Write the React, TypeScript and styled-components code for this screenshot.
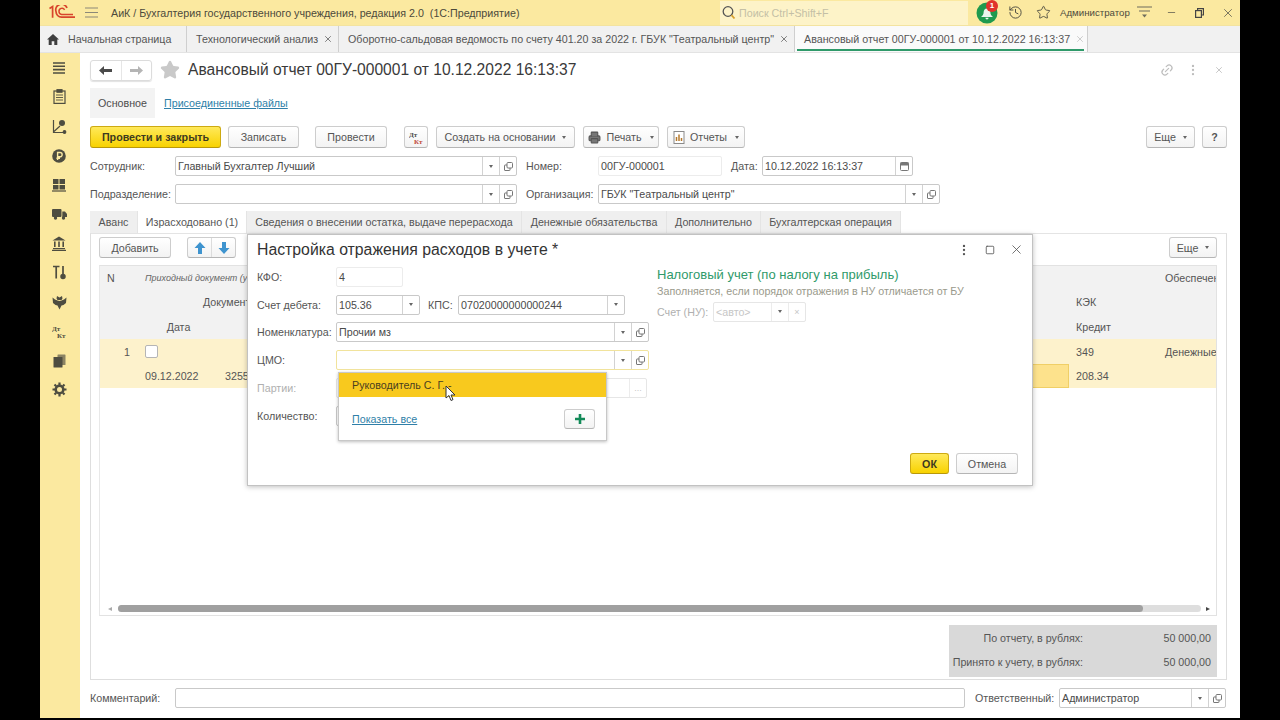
import React from "react";
import styled, { createGlobalStyle } from "styled-components";
import { History, Star, Link2, MoreVertical, X, Printer, Square, Minus } from "lucide-react";

const Global = createGlobalStyle`
  html, body { margin: 0; padding: 0; background: #000; overflow: hidden; }
  body { font-family: "Liberation Sans", Arial, sans-serif; font-size: 10.7px; color: #4a4a4a; }
  * { box-sizing: border-box; }
`;

const Page = styled.div`
  width: 1280px; height: 720px; padding: 0 40px 2px; background: #000;
`;
const Win = styled.div`
  position: relative; width: 1200px; height: 718px; display: flex; flex-direction: column; background: #fff; overflow: hidden;
`;

/* ---------- top bar ---------- */
const TopBar = styled.header`
  height: 26px; flex: none; display: flex; align-items: center; background: #fbe9a0; border-bottom: 1px solid #f3e3a0;
`;
const LogoSlot = styled.div`
  width: 45px; flex: none; padding-left: 9px; display: flex; align-items: center;
`;
const BurgerSlot = styled.div`
  width: 26px; flex: none; display: flex; align-items: center;
`;
const AppTitle = styled.div`
  width: 609px; flex: none; font-size: 10.7px; color: #4c4a3c; white-space: pre;
`;
const Search = styled.div`
  width: 248px; height: 24px; flex: none; display: flex; align-items: center; gap: 3px; padding-left: 2px; background: #fdf3c8; color: #c4bfa6; font-size: 10.7px;
`;
const IconSlot = styled.div<{ $w: number }>`
  position: relative; width: ${(p) => p.$w}px; flex: none; display: flex; justify-content: center; align-items: center;
`;
const UserName = styled.div`
  width: 74px; flex: none; margin-left: -2px; font-size: 9.7px; color: #4c4a3c; white-space: nowrap;
`;
const Badge = styled.span`
  position: absolute; top: -2px; left: 18px; width: 12px; height: 12px; border-radius: 50%; background: #e0332b; color: #fff; font-size: 8px; line-height: 12px; text-align: center; font-weight: 700;
`;
const Hue = styled.span<{ $c: string }>`
  display: flex; color: ${(p) => p.$c};
`;

/* ---------- window tabs ---------- */
const TabStrip = styled.nav`
  height: 27px; flex: none; display: flex; background: #f1f1f1; border-bottom: 1px solid #e3e3e3;
`;
const WinTab = styled.div<{ $w: number; $active?: boolean }>`
  position: relative; width: ${(p) => p.$w}px; display: flex; align-items: center; gap: 5px; padding-left: 9px;
  border-right: 1px solid #cfcfcf; background: ${(p) => (p.$active ? "#fafafa" : "transparent")}; color: #555; font-size: 10.7px; white-space: nowrap;
  ${(p) => p.$active && `&::after { content: ""; position: absolute; left: 2px; right: 3px; bottom: 1px; height: 2px; background: #2f9a6a; }`}
`;
const HomeLabel = styled.span`
  display: flex; align-items: center; gap: 9px; color: #555; margin-left: -2px;
`;
const TabClose = styled.span<{ $faint?: boolean }>`
  color: ${(p) => (p.$faint ? "#c4c4c4" : "#666")}; display: flex;
`;

/* ---------- workspace ---------- */
const Workspace = styled.div`
  flex: 1; display: flex; min-height: 0;
`;
const SideBar = styled.aside`
  width: 40px; flex: none; display: flex; flex-direction: column; align-items: center; padding-right: 2px; background: #fbe9a0; color: #4e4d40;
`;
const SideIcon = styled.div`
  height: 29.3px; display: flex; align-items: center; justify-content: center; flex: none;
`;
const FormArea = styled.main`
  flex: 1; display: flex; flex-direction: column; padding: 6px 13px 0 10px; background: #fff; min-width: 0;
`;
const HeaderRow = styled.div`
  height: 22px; display: flex; align-items: center;
`;
const NavGroup = styled.div`
  width: 62px; height: 21px; display: flex; border: 1px solid #dcdcdc; border-radius: 3px; box-shadow: 0 1px 1px #e2e2e2;
`;
const NavBtn = styled.div`
  flex: 1; display: flex; align-items: center; justify-content: center;
  & + & { border-left: 1px solid #e6e6e6; }
`;
const FavStar = styled.div`
  width: 36px; display: flex; justify-content: center; color: #c9c9c9;
`;
const FormTitle = styled.h1`
  margin: 0; flex: 1; font-size: 15.6px; font-weight: 400; color: #3a3a3a; white-space: nowrap;
`;
const HeaderTools = styled.div`
  display: flex; align-items: center; margin-right: -5px; color: #bdbdbd;
`;

const GroupTabs = styled.div`
  height: 30px; margin-top: 7px; display: flex; align-items: center;
`;
const GroupActive = styled.div`
  width: 65px; height: 30px; display: flex; align-items: center; justify-content: center; background: #f3f3f3; color: #4c4c4c; font-size: 10.7px;
`;
const LinkText = styled.a`
  color: #2f7fa8; text-decoration: underline; font-size: 10.7px;
`;
const AttachLink = styled(LinkText)`
  margin-left: 9px;
`;

const CommandBar = styled.div`
  height: 22px; margin-top: 8px; display: flex; align-items: center;
`;
const Btn = styled.div<{ $w: number; $ml?: number; $h?: number }>`
  width: ${(p) => p.$w}px; height: ${(p) => p.$h ?? 22}px; margin-left: ${(p) => p.$ml ?? 0}px; flex: none;
  display: flex; align-items: center; justify-content: center; gap: 4px;
  border: 1px solid #cdcdcd; border-bottom-color: #b5b5b5; border-radius: 3px; background: linear-gradient(#ffffff, #f3f3f3);
  color: #555; font-size: 10.7px; white-space: nowrap;
`;
const PrimaryBtn = styled(Btn)`
  border-color: #cdaa12; border-bottom-color: #b8980a; background: linear-gradient(#ffe95a, #f8d200); color: #3d3a20; font-weight: 700;
`;
const IconTextBtn = styled(Btn)`
  gap: 5px;
`;
const Spacer = styled.div`
  flex: 1;
`;
const Caret = styled.i`
  display: inline-block; width: 0; height: 0; border-left: 2.5px solid transparent; border-right: 2.5px solid transparent; border-top: 3px solid #666; margin-left: 3px;
`;

const FieldRow = styled.div`
  height: 20px; margin-top: 8px; display: flex; align-items: center;
`;
const Label = styled.div<{ $w: number; $ml?: number; $dim?: boolean }>`
  width: ${(p) => p.$w}px; margin-left: ${(p) => p.$ml ?? 0}px; flex: none; color: ${(p) => (p.$dim ? "#b0b0b0" : "#555")}; font-size: 10.7px; white-space: nowrap;
`;
const Field = styled.div<{ $w: number; $tone?: "soft" | "focus" | "dim" }>`
  width: ${(p) => p.$w}px; height: 20px; flex: none; display: flex; align-items: stretch; background: #fff; border-radius: 2px;
  border: 1px solid ${(p) => (p.$tone === "soft" ? "#ececec" : p.$tone === "focus" ? "#f1e39c" : p.$tone === "dim" ? "#e6e6e6" : "#c9c9c9")};
`;
const FieldText = styled.div<{ $dim?: boolean }>`
  flex: 1; min-width: 0; display: flex; align-items: center; padding-left: 2px; color: ${(p) => (p.$dim ? "#c6c6c6" : "#4a4a4a")}; font-size: 10.7px; white-space: nowrap; overflow: hidden;
`;
const FieldBtn = styled.div<{ $dim?: boolean }>`
  width: 17px; flex: none; display: flex; align-items: center; justify-content: center; border-left: 1px solid ${(p) => (p.$dim ? "#ececec" : "#d2d2d2")}; color: ${(p) => (p.$dim ? "#c6c6c6" : "#666")}; font-size: 9px;
`;
const FieldCaret = styled(Caret)`
  margin-left: 0;
`;

const PageTabs = styled.div`
  height: 22px; margin-top: 7px; display: flex;
`;
const PageTab = styled.div<{ $w: number; $active?: boolean }>`
  width: ${(p) => p.$w}px; display: flex; align-items: center; justify-content: center; font-size: 10.7px; white-space: nowrap; color: #555;
  background: ${(p) => (p.$active ? "#fff" : "#efefef")}; border-right: 1px solid #e4e4e4;
`;
const Panel = styled.section`
  height: 447px; flex: none; padding: 3px 9px 0 8px; display: flex; flex-direction: column; border: 1px solid #dedede; border-top-color: #e4e4e4;
`;
const PanelBar = styled.div`
  height: 21px; display: flex; align-items: center;
`;
const ArrowGroup = styled.div`
  width: 49px; height: 21px; margin-left: 16px; display: flex; border: 1px solid #cdcdcd; border-bottom-color: #b5b5b5; border-radius: 3px; background: linear-gradient(#fff, #f3f3f3);
`;
const ArrowBtn = styled.div`
  flex: 1; display: flex; align-items: center; justify-content: center; & + & { border-left: 1px solid #dcdcdc; }
`;

const Table = styled.div`
  height: 351px; margin-top: 7px; flex: none; display: flex; flex-direction: column; border: 1px solid #e2e2e2; border-left-color: #e8e8e8;
`;
const TRow = styled.div<{ $bg: string; $h: number }>`
  height: ${(p) => p.$h}px; flex: none; display: grid; grid-template-columns: 37px 83px 680px 169px 89px 1fr; background: ${(p) => p.$bg}; overflow: hidden;
`;
const Cell = styled.div<{ $pad?: number; $hl?: boolean; $italic?: boolean; $span?: number }>`
  display: flex; align-items: center; padding-left: ${(p) => p.$pad ?? 7}px; color: #555; white-space: nowrap; overflow: hidden; font-size: 10.7px;
  ${(p) => p.$span && `grid-column: span ${p.$span};`}
  ${(p) => p.$italic && "font-style: italic; font-size: 9px; color: #666;"}
  ${(p) => p.$hl && "background: #fde28c; border: 1px solid #f0cf66;"}
`;
const CenterCell = styled(Cell)`
  justify-content: center; padding-left: 0;
`;
const NumberCell = styled(Cell)`
  justify-content: flex-end; padding: 0 7px 0 0;
`;
const CheckBox = styled.span`
  width: 13px; height: 13px; border: 1px solid #b5b5b5; border-radius: 2px; background: #fff;
`;
const TableFill = styled.div`
  flex: 1;
`;
const ScrollRow = styled.div`
  height: 13px; flex: none; display: flex; align-items: center; padding: 0 6px 0 8px; color: #777;
`;
const ScrollTrack = styled.div`
  flex: 1; height: 7px; margin: 0 5px 0 6px; border-radius: 4px; background: #dedede;
`;
const ScrollThumb = styled.div`
  width: 1025px; height: 7px; border-radius: 4px; background: #a0a0a0;
`;
const Totals = styled.div`
  width: 268px; height: 52px; margin: 9px 0 0 auto; padding: 1px 6px 0 3px; background: #d9d9d9; display: grid; grid-template-columns: 131px 1fr; grid-auto-rows: 24px; align-items: center; color: #555; font-size: 10.7px; white-space: nowrap;
`;
const TotalLabel = styled.div`
  text-align: right;
`;
const TotalValue = styled.div`
  text-align: right;
`;
const Tri = styled.i<{ $dir: "l" | "r" }>`
  width: 0; height: 0; border-top: 2.5px solid transparent; border-bottom: 2.5px solid transparent;
  ${(p) => (p.$dir === "l" ? "border-right: 4px solid #aaa;" : "border-left: 4px solid #444;")}
`;

/* ---------- dialog ---------- */
const Dialog = styled.section`
  position: absolute; left: 207px; top: 234px; width: 786px; height: 252px; padding: 5px 14px 11px 9px; display: flex; flex-direction: column; background: #fff;
  border: 1px solid #c2c2c2; box-shadow: 0 1px 5px rgba(0,0,0,.25);
`;
const DialogHead = styled.div`
  height: 19px; display: flex; align-items: center;
`;
const DialogTitle = styled.h2`
  flex: 1; margin: 0; font-size: 15.8px; font-weight: 400; color: #333; white-space: nowrap;
`;
const DialogTools = styled.div`
  display: flex; align-items: center; margin-right: -11px; color: #555;
`;
const DialogBody = styled.div`
  flex: 1; display: grid; grid-template-columns: 400px 1fr; min-height: 0;
`;
const FormCol = styled.div`
  padding-top: 0;
`;
const DRow = styled.div`
  height: 20px; margin-top: 7.8px; display: flex; align-items: center;
`;
const TaxCol = styled.div`
  padding-top: 8px;
`;
const TaxTitle = styled.div`
  font-size: 13px; color: #2f9a6a; line-height: 15px; white-space: nowrap;
`;
const TaxNote = styled.div`
  font-size: 10.7px; color: #9a9a8c; line-height: 13px; margin-top: 3px; white-space: nowrap;
`;
const TaxRow = styled.div`
  height: 19px; margin-top: 4px; display: flex; align-items: center;
`;
const DialogFoot = styled.div`
  display: flex; justify-content: flex-end; align-items: center;
`;
const DropDown = styled.div`
  position: absolute; left: 90px; top: 137px; width: 269px; height: 69px; background: #fff; border: 1px solid #c8c8c8; box-shadow: 0 1px 3px rgba(0,0,0,.25); display: flex; flex-direction: column;
`;
const DropItem = styled.div`
  height: 24px; flex: none; background: #f8c91e; color: #4a4020; display: flex; align-items: center; padding-left: 13px; font-size: 10.7px;
`;
const DropFoot = styled.div`
  flex: 1; display: flex; align-items: center; justify-content: space-between; padding: 0 11px 0 13px;
`;
const Pointer = styled.svg`
  position: absolute; left: 197px; top: 150px;
`;

const Open = () => (
  <svg width="9" height="9" viewBox="0 0 9 9" fill="none" stroke="#777" strokeWidth="1">
    <rect x="3" y="0.5" width="5.5" height="5.5" rx="1" />
    <path d="M3 3H1a.5.5 0 0 0-.5.5V8a.5.5 0 0 0 .5.5h4.5a.5.5 0 0 0 .5-.5V6" />
  </svg>
);
const Logo = () => (
  <svg width="26" height="15" viewBox="0 0 26 15" fill="none" stroke="#d8442c" strokeWidth="1.7">
    <path d="M.5 3.4 3.6 1.6V12.8" />
    <path d="M18 3.1A5.6 5.6 0 0 0 7 6.6a5.6 5.6 0 0 0 5.5 5.6H26" />
    <path d="M15.6 4.8A3 3 0 0 0 10 6.6a3 3 0 0 0 2.6 2.9H24" strokeWidth="1.5" />
  </svg>
);
const Burger = () => (
  <svg width="13" height="11" viewBox="0 0 13 11" stroke="#8b8878" strokeWidth="1.2"><path d="M0 1H13M0 5.5H13M0 10H13" /></svg>
);
const Loupe = () => (
  <svg width="14" height="15" viewBox="0 0 14 15" fill="none" stroke="#555" strokeWidth="1.3"><circle cx="6" cy="6.5" r="4.8" /><path d="M9.5 10.2 12.5 13.5" stroke="#d8a02c" strokeWidth="1.8" /></svg>
);
const Bell = () => (
  <svg width="22" height="22" viewBox="0 0 22 22">
    <circle cx="11" cy="11" r="10.5" fill="#1f9a4e" />
    <path d="M11 6.5c2.4 0 3.4 1.8 3.4 4 0 2 1 3.2 2.6 4.5H5c1.6-1.3 2.6-2.5 2.6-4.5 0-2.2 1-4 3.4-4zM9.4 15.8h3.2a1.6 1.6 0 0 1-3.2 0z" fill="#e9f5ee" />
  </svg>
);
const MenuDown = () => (
  <svg width="15" height="13" viewBox="0 0 15 13" fill="#6f6d5c" stroke="#6f6d5c"><path d="M0 1H15M2 5H13" strokeWidth="1.2" /><path d="M5 8.5H10L7.5 11.5Z" stroke="none" /></svg>
);
const Restore = () => (
  <svg width="9" height="10" viewBox="0 0 9 10" fill="none" stroke="#444" strokeWidth="1.2"><rect x="0.6" y="2.6" width="5.8" height="6.8" /><path d="M2.6 2.6V.6H8.4V7H6.4" /></svg>
);
const HomeIcon = () => (
  <svg width="12" height="11" viewBox="0 0 12 11" fill="#3f3f3f"><path d="M6 0 12 5.5H10.3V11H7.3V7.2H4.7V11H1.7V5.5H0Z" /></svg>
);
const NavArrow = ({ right, color }: { right?: boolean; color: string }) => (
  <svg width="13" height="9" viewBox="0 0 13 9" fill={color} style={right ? { transform: "scaleX(-1)" } : undefined}>
    <path d="M0 4.5 5 0V3H13V6H5V9Z" />
  </svg>
);
const DtKt = ({ kt = "#c24a3a", dt = "#4a4a4a" }) => (
  <svg width="14" height="15" viewBox="0 0 14 15" fontFamily="Liberation Serif, serif" fontSize="7" fontWeight="700">
    <text x="0" y="7" fill={dt}>Дт</text>
    <text x="5" y="14" fill={kt}>Кт</text>
  </svg>
);
const ReportIcon = () => (
  <svg width="12" height="13" viewBox="0 0 12 13"><rect x="1" y="0.5" width="10" height="12" fill="#fff" stroke="#8a8a8a" /><path d="M3.5 10V6M6 10V3.5M8.5 10V7" stroke="#b5792c" strokeWidth="1.5" /></svg>
);
const Calendar = () => (
  <svg width="9" height="9" viewBox="0 0 9 9"><rect x="0.5" y="0.5" width="8" height="8" rx="1" fill="#fff" stroke="#777" /><rect x="0.5" y="0.5" width="8" height="3" fill="#777" /></svg>
);
const Up = ({ down }: { down?: boolean }) => (
  <svg width="12" height="14" viewBox="0 0 12 14" fill="#3f94cf">
    <path d={down ? "M4 1H8V7H11.5L6 13 .5 7H4Z" : "M4 13H8V7H11.5L6 1 .5 7H4Z"} />
  </svg>
);
const Plus = () => (
  <svg width="10" height="10" viewBox="0 0 10 10" fill="#128a58"><path d="M3.7 0H6.3V3.7H10V6.3H6.3V10H3.7V6.3H0V3.7H3.7Z" /></svg>
);

const sideIcons = [
  <svg width="14" height="12" viewBox="0 0 14 12" stroke="currentColor" strokeWidth="1.6"><path d="M1 1H13M1 4.3H13M1 7.6H13M1 11H13" /></svg>,
  <svg width="13" height="15" viewBox="0 0 13 15" fill="none" stroke="currentColor" strokeWidth="1.2"><rect x="1" y="2" width="11" height="12.4" /><rect x="4" y=".7" width="5" height="2.5" fill="currentColor" /><path d="M3 6H10M3 8.5H10M3 11H10" strokeWidth=".9" /></svg>,
  <svg width="15" height="15" viewBox="0 0 15 15" fill="none" stroke="currentColor" strokeWidth="1.2"><path d="M1.5 1V13.5H12M2 12.5 8 7" /><circle cx="10" cy="4" r="3" fill="currentColor" stroke="none" /><circle cx="12.5" cy="13" r="1.3" fill="currentColor" /></svg>,
  <svg width="14" height="14" viewBox="0 0 14 14"><circle cx="7" cy="7" r="6.8" fill="currentColor" /><path d="M5.6 11V3.5H8a2.1 2.1 0 0 1 0 4.3H5M4.4 9.3H8" fill="none" stroke="#fbe9a0" strokeWidth="1.4" /></svg>,
  <svg width="14" height="14" viewBox="0 0 14 14" fill="currentColor"><rect x="1" y="1" width="5.5" height="5" /><rect x="7.5" y="1" width="5.5" height="5" /><rect x="1" y="7" width="5.5" height="4.5" /><rect x="7.5" y="7" width="5.5" height="4.5" /><rect x="0" y="12.4" width="14" height="1.2" /></svg>,
  <svg width="15" height="12" viewBox="0 0 15 12" fill="currentColor"><rect x="0" y="1" width="9.5" height="8" rx="1" /><path d="M10.3 3.5H13L15 6V9H10.3Z" /><circle cx="3.5" cy="10" r="1.7" /><circle cx="11.5" cy="10" r="1.7" /></svg>,
  <svg width="14" height="15" viewBox="0 0 14 15" fill="currentColor"><path d="M7 .5 13.5 4.5H.5Z" /><rect x="2" y="5.5" width="1.6" height="5.5" /><rect x="6.2" y="5.5" width="1.6" height="5.5" /><rect x="10.4" y="5.5" width="1.6" height="5.5" /><rect x="1" y="12" width="12" height="1.2" /><rect x="0" y="13.8" width="14" height="1.2" /></svg>,
  <svg width="13" height="15" viewBox="0 0 13 15" fill="none" stroke="currentColor" strokeWidth="1.7"><path d="M0 1.5H6.5M3.2 1.5V13.5M10 1V9" /><circle cx="10" cy="11.5" r="1.9" fill="currentColor" /></svg>,
  <svg width="15" height="15" viewBox="0 0 15 15" fill="currentColor"><path d="M5 1 7.5 2.5 10 1 10.5 3.5 9.5 5H5.5L4.5 3.5Z" /><path d="M.5 2.5 3 4.5 5.5 5.5 7.5 6 9.5 5.5 12 4.5 14.5 2.5 14 8 11.5 10 9.5 10.5 7.5 14.5 5.5 10.5 3.5 10 1 8Z" /></svg>,
  <DtKt kt="#4e4d40" dt="#4e4d40" />,
  <svg width="13" height="14" viewBox="0 0 13 14" fill="currentColor"><rect x="4.5" y="0.5" width="8" height="10.5" rx=".6" opacity=".65" /><rect x="0.5" y="3" width="9" height="10.5" rx=".6" /></svg>,
  <svg width="15" height="15" viewBox="0 0 15 15" fill="none"><circle cx="7.5" cy="7.5" r="3.8" stroke="currentColor" strokeWidth="2.6" /><path d="M7.5 .5V3M7.5 12V14.5M.5 7.5H3M12 7.5H14.5M2.5 2.5 4.2 4.2M10.8 10.8 12.5 12.5M12.5 2.5 10.8 4.2M4.2 10.8 2.5 12.5" stroke="currentColor" strokeWidth="2.2" /></svg>,
];

const pageTabs: { t: string; w: number; active?: boolean }[] = [
  { t: "Аванс", w: 48 },
  { t: "Израсходовано (1)", w: 109, active: true },
  { t: "Сведения о внесении остатка, выдаче перерасхода", w: 275 },
  { t: "Денежные обязательства", w: 145 },
  { t: "Дополнительно", w: 94 },
  { t: "Бухгалтерская операция", w: 140 },
];

export default function App() {
  return (
    <Page>
      <Global />
      <Win>
        <TopBar>
          <LogoSlot><Logo /></LogoSlot>
          <BurgerSlot><Burger /></BurgerSlot>
          <AppTitle>АиК / Бухгалтерия государственного учреждения, редакция 2.0  (1С:Предприятие)</AppTitle>
          <Search><Loupe />Поиск Ctrl+Shift+F</Search>
          <IconSlot $w={38}><Bell /><Badge>1</Badge></IconSlot>
          <IconSlot $w={18}><Hue $c="#4a493f"><History size={15} strokeWidth={1.5} /></Hue></IconSlot>
          <IconSlot $w={38}><Hue $c="#4a493f"><Star size={15} strokeWidth={1.4} /></Hue></IconSlot>
          <UserName>Администратор</UserName>
          <IconSlot $w={20}><MenuDown /></IconSlot>
          <IconSlot $w={34}><Hue $c="#55534a"><Minus size={11} strokeWidth={1.6} /></Hue></IconSlot>
          <IconSlot $w={22}><Restore /></IconSlot>
          <IconSlot $w={36}><Hue $c="#55534a"><X size={14} strokeWidth={1.3} /></Hue></IconSlot>
        </TopBar>

        <TabStrip>
          <WinTab $w={147}><HomeLabel><HomeIcon />Начальная страница</HomeLabel></WinTab>
          <WinTab $w={152}>Технологический анализ<TabClose><X size={10} /></TabClose></WinTab>
          <WinTab $w={456}>Оборотно-сальдовая ведомость по счету 401.20 за 2022 г. ГБУК "Театральный центр"<TabClose><X size={10} /></TabClose></WinTab>
          <WinTab $w={293} $active>Авансовый отчет 00ГУ-000001 от 10.12.2022 16:13:37<TabClose $faint><X size={10} /></TabClose></WinTab>
        </TabStrip>

        <Workspace>
          <SideBar>
            {sideIcons.map((icon, i) => <SideIcon key={i}>{icon}</SideIcon>)}
          </SideBar>
          <FormArea>
            <HeaderRow>
              <NavGroup>
                <NavBtn><NavArrow color="#4a4a4a" /></NavBtn>
                <NavBtn><NavArrow right color="#b5b5b5" /></NavBtn>
              </NavGroup>
              <FavStar><Star size={20} fill="#c9c9c9" /></FavStar>
              <FormTitle>Авансовый отчет 00ГУ-000001 от 10.12.2022 16:13:37</FormTitle>
              <HeaderTools>
                <IconSlot $w={26}><Link2 size={14} style={{ transform: "rotate(-45deg)" }} /></IconSlot>
                <IconSlot $w={26}><MoreVertical size={14} /></IconSlot>
                <IconSlot $w={26}><X size={10} /></IconSlot>
              </HeaderTools>
            </HeaderRow>

            <GroupTabs>
              <GroupActive>Основное</GroupActive>
              <AttachLink>Присоединенные файлы</AttachLink>
            </GroupTabs>

            <CommandBar>
              <PrimaryBtn $w={131}>Провести и закрыть</PrimaryBtn>
              <Btn $w={71} $ml={7}>Записать</Btn>
              <Btn $w={72} $ml={16}>Провести</Btn>
              <Btn $w={24} $ml={17}><DtKt /></Btn>
              <Btn $w={139} $ml={8}>Создать на основании<Caret /></Btn>
              <IconTextBtn $w={76} $ml={8}><Printer size={13} fill="#777" />Печать<Caret /></IconTextBtn>
              <IconTextBtn $w={78} $ml={8}><ReportIcon />Отчеты<Caret /></IconTextBtn>
              <Spacer />
              <Btn $w={49}>Еще<Caret /></Btn>
              <Btn $w={25} $ml={7}><b>?</b></Btn>
            </CommandBar>

            <FieldRow>
              <Label $w={85}>Сотрудник:</Label>
              <Field $w={342}><FieldText>Главный Бухгалтер Лучший</FieldText><FieldBtn><FieldCaret /></FieldBtn><FieldBtn><Open /></FieldBtn></Field>
              <Label $w={72} $ml={9}>Номер:</Label>
              <Field $w={124} $tone="soft"><FieldText>00ГУ-000001</FieldText></Field>
              <Label $w={31} $ml={9}>Дата:</Label>
              <Field $w={151}><FieldText>10.12.2022 16:13:37</FieldText><FieldBtn><Calendar /></FieldBtn></Field>
            </FieldRow>
            <FieldRow>
              <Label $w={85}>Подразделение:</Label>
              <Field $w={342}><FieldText /><FieldBtn><FieldCaret /></FieldBtn><FieldBtn><Open /></FieldBtn></Field>
              <Label $w={72} $ml={9}>Организация:</Label>
              <Field $w={342}><FieldText>ГБУК "Театральный центр"</FieldText><FieldBtn><FieldCaret /></FieldBtn><FieldBtn><Open /></FieldBtn></Field>
            </FieldRow>

            <PageTabs>
              {pageTabs.map((t) => <PageTab key={t.t} $w={t.w} $active={t.active}>{t.t}</PageTab>)}
            </PageTabs>

            <Panel>
              <PanelBar>
                <Btn $w={72} $h={21}>Добавить</Btn>
                <ArrowGroup>
                  <ArrowBtn><Up /></ArrowBtn>
                  <ArrowBtn><Up down /></ArrowBtn>
                </ArrowGroup>
                <Spacer />
                <Btn $w={48} $h={21}>Еще<Caret /></Btn>
              </PanelBar>
              <Table>
                <TRow $bg="#f2f2f2" $h={23}>
                  <Cell>N</Cell>
                  <Cell $italic $pad={8} $span={2}>Приходный документ (у</Cell>
                  <Cell />
                  <Cell />
                  <Cell>Обеспечен</Cell>
                </TRow>
                <TRow $bg="#f2f2f2" $h={25}>
                  <Cell />
                  <Cell $pad={66} $span={2}>Документ</Cell>
                  <Cell />
                  <Cell>КЭК</Cell>
                  <Cell />
                </TRow>
                <TRow $bg="#f2f2f2" $h={25}>
                  <Cell />
                  <CenterCell>Дата</CenterCell>
                  <Cell />
                  <Cell />
                  <Cell>Кредит</Cell>
                  <Cell />
                </TRow>
                <TRow $bg="#fdf2cc" $h={25}>
                  <NumberCell>1</NumberCell>
                  <Cell $pad={8}><CheckBox /></Cell>
                  <Cell />
                  <Cell />
                  <Cell>349</Cell>
                  <Cell>Денежные</Cell>
                </TRow>
                <TRow $bg="#fdf2cc" $h={24}>
                  <Cell />
                  <Cell $pad={8}>09.12.2022</Cell>
                  <Cell $pad={5}>3255</Cell>
                  <Cell $hl />
                  <Cell>208.34</Cell>
                  <Cell />
                </TRow>
                <TableFill />
                <ScrollRow>
                  <Tri $dir="l" />
                  <ScrollTrack><ScrollThumb /></ScrollTrack>
                  <Tri $dir="r" />
                </ScrollRow>
              </Table>
              <Totals>
                <TotalLabel>По отчету, в рублях:</TotalLabel><TotalValue>50 000,00</TotalValue>
                <TotalLabel>Принято к учету, в рублях:</TotalLabel><TotalValue>50 000,00</TotalValue>
              </Totals>
            </Panel>

            <FieldRow>
              <Label $w={85}>Комментарий:</Label>
              <Field $w={790}><FieldText /></Field>
              <Label $w={84} $ml={10}>Ответственный:</Label>
              <Field $w={167}><FieldText>Администратор</FieldText><FieldBtn><FieldCaret /></FieldBtn><FieldBtn><Open /></FieldBtn></Field>
            </FieldRow>
          </FormArea>
        </Workspace>

        <Dialog>
          <DialogHead>
            <DialogTitle>Настройка отражения расходов в учете *</DialogTitle>
            <DialogTools>
              <IconSlot $w={26}><MoreVertical size={14} /></IconSlot>
              <IconSlot $w={26}><Square size={10} /></IconSlot>
              <IconSlot $w={26}><X size={15} strokeWidth={1.3} /></IconSlot>
            </DialogTools>
          </DialogHead>
          <DialogBody>
            <FormCol>
              <DRow>
                <Label $w={79}>КФО:</Label>
                <Field $w={67} $tone="soft"><FieldText>4</FieldText></Field>
              </DRow>
              <DRow>
                <Label $w={79}>Счет дебета:</Label>
                <Field $w={84}><FieldText>105.36</FieldText><FieldBtn><FieldCaret /></FieldBtn></Field>
                <Label $w={30} $ml={8}>КПС:</Label>
                <Field $w={167}><FieldText>07020000000000244</FieldText><FieldBtn><FieldCaret /></FieldBtn></Field>
              </DRow>
              <DRow>
                <Label $w={79}>Номенклатура:</Label>
                <Field $w={313}><FieldText>Прочии мз</FieldText><FieldBtn><FieldCaret /></FieldBtn><FieldBtn><Open /></FieldBtn></Field>
              </DRow>
              <DRow>
                <Label $w={79}>ЦМО:</Label>
                <Field $w={313} $tone="focus"><FieldText /><FieldBtn><FieldCaret /></FieldBtn><FieldBtn><Open /></FieldBtn></Field>
              </DRow>
              <DRow>
                <Label $w={79} $dim>Партии:</Label>
                <Field $w={311} $tone="dim"><FieldText /><FieldBtn $dim>...</FieldBtn></Field>
              </DRow>
              <DRow>
                <Label $w={79}>Количество:</Label>
                <Field $w={60}><FieldText /></Field>
              </DRow>
            </FormCol>
            <TaxCol>
              <TaxTitle>Налоговый учет (по налогу на прибыль)</TaxTitle>
              <TaxNote>Заполняется, если порядок отражения в НУ отличается от БУ</TaxNote>
              <TaxRow>
                <Label $w={56} $dim>Счет (НУ):</Label>
                <Field $w={93} $tone="dim"><FieldText $dim>&lt;авто&gt;</FieldText><FieldBtn $dim><FieldCaret /></FieldBtn><FieldBtn $dim>×</FieldBtn></Field>
              </TaxRow>
            </TaxCol>
          </DialogBody>
          <DialogFoot>
            <PrimaryBtn $w={39} $h={21}>ОК</PrimaryBtn>
            <Btn $w={62} $h={21} $ml={7}>Отмена</Btn>
          </DialogFoot>
          <DropDown>
            <DropItem>Руководитель С. Г. -</DropItem>
            <DropFoot>
              <LinkText>Показать все</LinkText>
              <Btn $w={31} $h={20}><Plus /></Btn>
            </DropFoot>
          </DropDown>
          <Pointer width="12" height="17" viewBox="0 0 12 17">
            <path d="M1 1V13L4 10.5 6 15.5 8 14.6 6 10H10Z" fill="#fff" stroke="#333" strokeWidth="1" />
          </Pointer>
        </Dialog>
      </Win>
    </Page>
  );
}
